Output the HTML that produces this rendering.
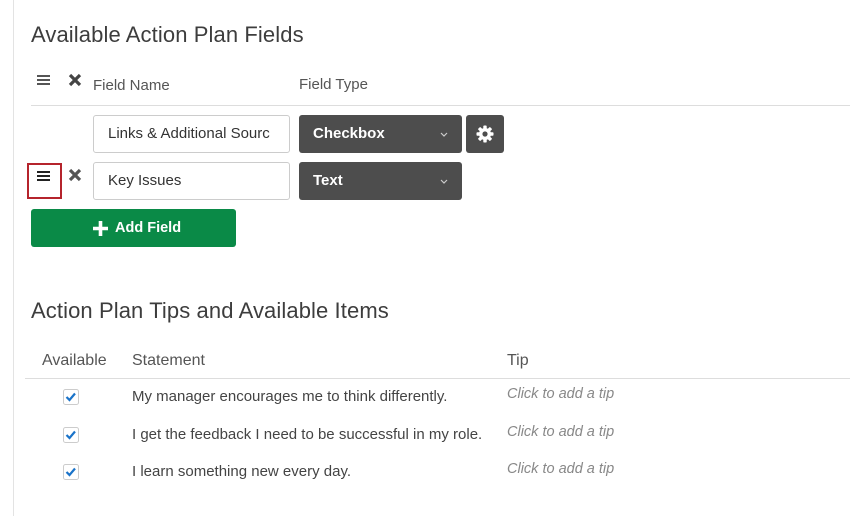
<!DOCTYPE html>
<html><head><meta charset="utf-8"><style>
*{margin:0;padding:0;box-sizing:border-box}
body{width:850px;height:516px;background:#fff;font-family:"Liberation Sans",sans-serif;color:#444;position:relative;overflow:hidden}
.a{position:absolute;white-space:nowrap}
.h1{font-size:22px;color:#3d3d3d;letter-spacing:0.1px}
.th{font-size:15px;color:#555}
.inp{position:absolute;border:1px solid #ccc;border-radius:3px;background:#fff;font-size:15px;color:#333;padding-left:14px;line-height:36px;overflow:hidden;white-space:nowrap}
.sel{position:absolute;background:#4d4d4d;border-radius:3px;color:#fff;font-weight:bold;font-size:15px;line-height:37px;padding-left:14px}
.sel svg{position:absolute;right:14px;top:17px}
.td{font-size:15px;color:#444}
.tip{font-size:14.5px;color:#888;font-style:italic}
</style></head><body>
<div class="a" style="left:13px;top:0;width:1px;height:516px;background:#e3e3e3"></div>
<div class="a h1" style="left:31px;top:22px">Available Action Plan Fields</div>

<svg class="a" style="left:37px;top:75px" width="14" height="11"><rect y="0" width="13" height="2" fill="#555"/><rect y="4" width="13" height="2" fill="#555"/><rect y="8" width="13" height="2" fill="#555"/></svg>
<svg class="a" style="left:68px;top:73px" width="14" height="14"><path d="M2 2L12 12M12 2L2 12" stroke="#444" stroke-width="3.2"/></svg>
<div class="a th" style="left:93px;top:77px">Field Name</div>
<div class="a th" style="left:299px;top:76px">Field Type</div>
<div class="a" style="left:31px;top:105px;width:819px;height:1px;background:#ddd"></div>

<div class="inp" style="left:93px;top:115px;width:197px;height:38px">Links &amp; Additional Sourc</div>
<div class="sel" style="left:299px;top:115px;width:163px;height:38px">Checkbox<svg width="8" height="5"><path d="M1 1L4 4L7 1" stroke="#ccc" fill="none" stroke-width="1.2"/></svg></div>
<div class="a" style="left:466px;top:115px;width:38px;height:38px;background:#4d4d4d;border-radius:3px"><svg style="position:absolute;left:10px;top:10px" width="18" height="18" viewBox="0 0 18 18"><g fill="#fff"><circle cx="9" cy="9" r="6"/><rect x="7.3" y="0.5" width="3.4" height="17" rx="0.8"/><rect x="7.3" y="0.5" width="3.4" height="17" rx="0.8" transform="rotate(45 9 9)"/><rect x="7.3" y="0.5" width="3.4" height="17" rx="0.8" transform="rotate(90 9 9)"/><rect x="7.3" y="0.5" width="3.4" height="17" rx="0.8" transform="rotate(135 9 9)"/></g><circle cx="9" cy="9" r="2.6" fill="#4d4d4d"/></svg></div>

<div class="a" style="left:27px;top:163px;width:35px;height:36px;border:2px solid #b5242c"></div>
<svg class="a" style="left:37px;top:171px" width="14" height="11"><rect y="0" width="13" height="2" fill="#222"/><rect y="4" width="13" height="2" fill="#222"/><rect y="8" width="13" height="2" fill="#222"/></svg>
<svg class="a" style="left:68px;top:168px" width="14" height="14"><path d="M2 2L12 12M12 2L2 12" stroke="#555" stroke-width="3.2"/></svg>
<div class="inp" style="left:93px;top:162px;width:197px;height:38px">Key Issues</div>
<div class="sel" style="left:299px;top:162px;width:163px;height:38px">Text<svg width="8" height="5"><path d="M1 1L4 4L7 1" stroke="#ccc" fill="none" stroke-width="1.2"/></svg></div>

<div class="a" style="left:31px;top:209px;width:205px;height:38px;background:#0a8a47;border-radius:3px;color:#fff;font-weight:bold;font-size:14.5px;line-height:38px">
<svg style="position:absolute;left:62px;top:12px" width="15" height="15"><path d="M7.5 0V15M0 7.5H15" stroke="#fff" stroke-width="3.6"/></svg>
<span style="position:absolute;left:84px">Add Field</span></div>

<div class="a h1" style="left:31px;top:298px">Action Plan Tips and Available Items</div>
<div class="a th" style="left:42px;top:352px;font-size:16px">Available</div>
<div class="a th" style="left:132px;top:352px;font-size:16px">Statement</div>
<div class="a th" style="left:507px;top:352px;font-size:16px">Tip</div>
<div class="a" style="left:25px;top:378px;width:825px;height:1px;background:#ddd"></div>

<svg class="a" style="left:63px;top:389px" width="16" height="16"><rect x="0.5" y="0.5" width="15" height="15" rx="2" fill="#fff" stroke="#ccc"/><path d="M3.5 8L6.5 11L12 4.5" stroke="#1a73c9" stroke-width="2.2" fill="none"/></svg>
<div class="a td" style="left:132px;top:388px">My manager encourages me to think differently.</div>
<div class="a tip" style="left:507px;top:386px">Click to add a tip</div>

<svg class="a" style="left:63px;top:427px" width="16" height="16"><rect x="0.5" y="0.5" width="15" height="15" rx="2" fill="#fff" stroke="#ccc"/><path d="M3.5 8L6.5 11L12 4.5" stroke="#1a73c9" stroke-width="2.2" fill="none"/></svg>
<div class="a td" style="left:132px;top:426px">I get the feedback I need to be successful in my role.</div>
<div class="a tip" style="left:507px;top:424px">Click to add a tip</div>

<svg class="a" style="left:63px;top:464px" width="16" height="16"><rect x="0.5" y="0.5" width="15" height="15" rx="2" fill="#fff" stroke="#ccc"/><path d="M3.5 8L6.5 11L12 4.5" stroke="#1a73c9" stroke-width="2.2" fill="none"/></svg>
<div class="a td" style="left:132px;top:463px">I learn something new every day.</div>
<div class="a tip" style="left:507px;top:461px">Click to add a tip</div>
</body></html>
